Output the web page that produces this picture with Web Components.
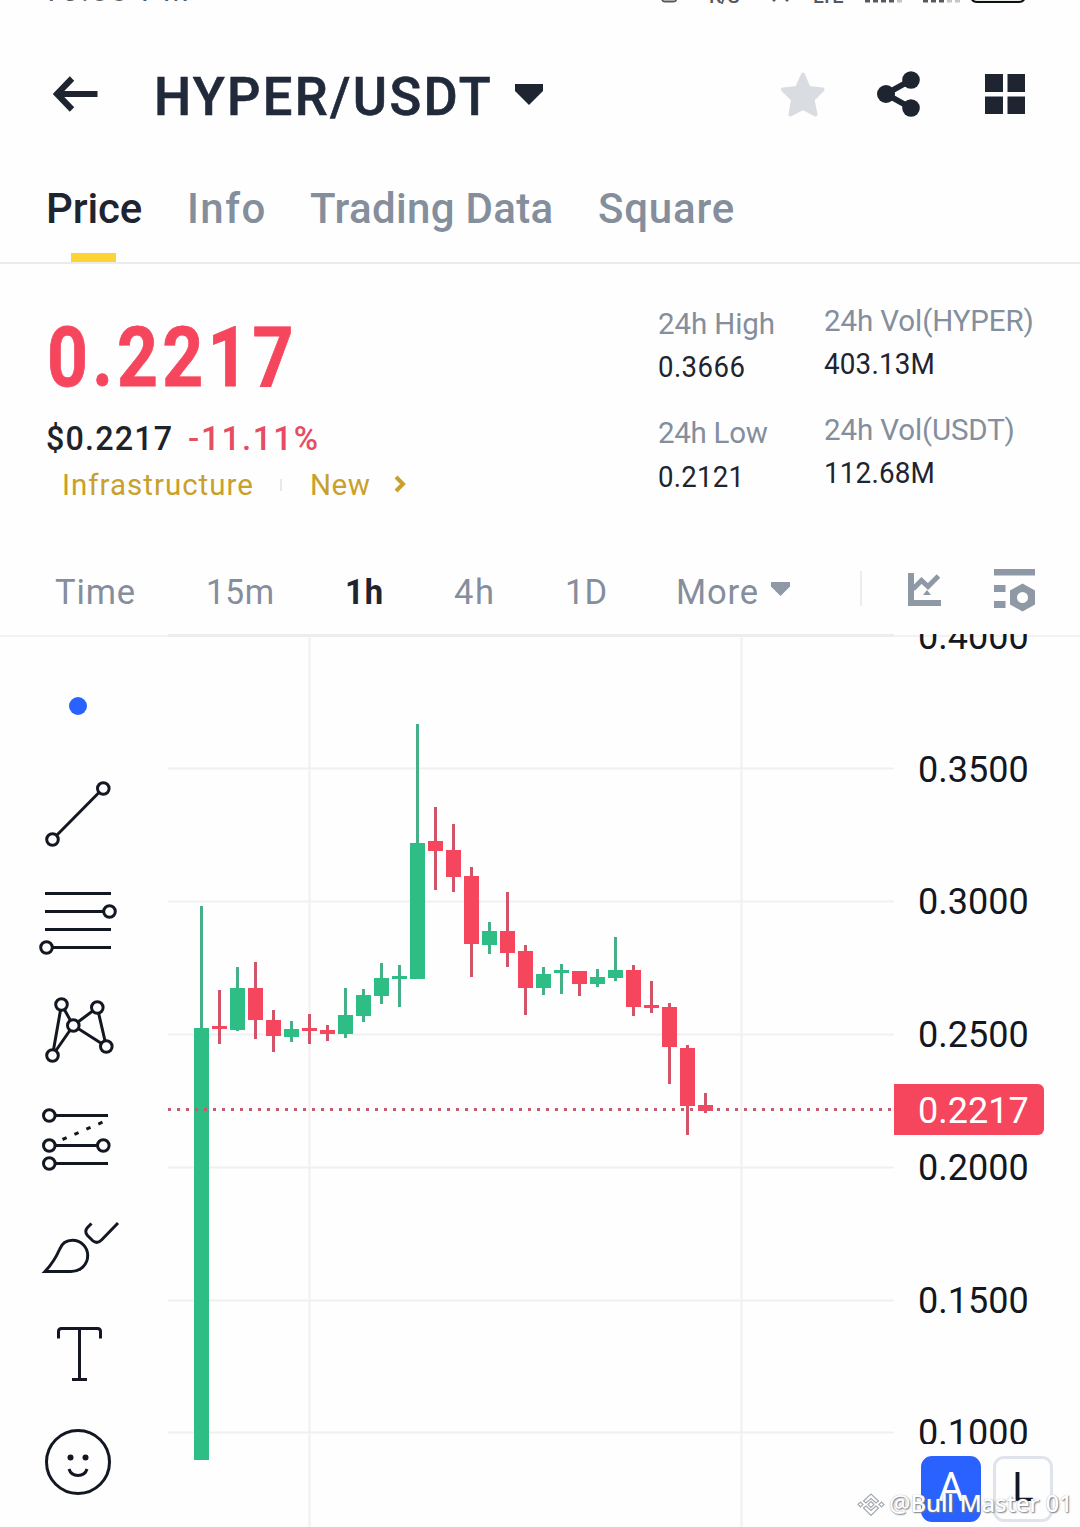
<!DOCTYPE html>
<html lang="en">
<head>
<meta charset="utf-8">
<title>HYPER/USDT</title>
<style>
html, body {
  margin: 0;
  padding: 0;
}
body {
  width: 1080px;
  height: 1527px;
  overflow: hidden;
  background: #fefefe;
  color: #1e2329;
  font-family: Roboto, "Noto Sans", sans-serif;
}
</style>
</head>
<body>
<trade-app></trade-app>
<script>
var ink = '#1e2430'
var gray = '#848e9c'
var red = '#f6465d'
var green = '#2ebd85'

function define(name, html, setup) {
  customElements.define(name, class extends HTMLElement {
    constructor() {
      super()
      this.attachShadow({mode: 'open'})
    }
    connectedCallback() {
      this.shadowRoot.innerHTML = html
      if(setup) setup(this, this.shadowRoot)
    }
  })
}

// text that spreads its letters to fill the width in w,
// squash makes the letters themselves narrower
define('fit-text', `
<style>
:host {
  display: block;
  white-space: nowrap;
  flex: none;
}
span {
  display: inline-block;
  transform-origin: left;
}
</style>
<span><slot></slot></span>`, function(el, root) {
  var span = root.querySelector('span')
  var w = Number(el.getAttribute('w'))
  var squash = Number(el.getAttribute('squash') || 1)
  el.style.width = w + 'px'
  var n = el.textContent.length
  var bearing = parseFloat(getComputedStyle(el).fontSize) * 0.03
  var natural = span.getBoundingClientRect().width
  span.style.letterSpacing = ((w + bearing) / squash - natural) / (n - 1) + 'px'
  if(squash != 1) span.style.transform = 'scaleX(' + squash + ')'
})

define('status-bar', `
<style>
:host {
  display: flex;
  height: 4px;
  overflow: hidden;
  color: #55585e;
  font-size: 30px;
  line-height: 30px;
}
fit-text {
  margin: -24px 0 0 42px;
}
.net {
  font-size: 20px;
  font-weight: 500;
  margin: -19px 0 0 0;
}
svg {
  display: block;
}
</style>
<fit-text w="146">10:33 PM</fit-text>
<svg width="521" height="4" viewBox="188 0 521 4"><path d="M662 0q1 1.500 3 1.500h8q3 0 3-1.500" fill="none" stroke="#55585e" stroke-width="1.800"/></svg>
<fit-text class="net" w="30">K/S</fit-text>
<svg width="74" height="4" viewBox="739 0 74 4"><path d="M772 0l2 2 2-2M785 0l2 2 2-2" fill="#55585e"/></svg>
<fit-text class="net" w="30">LTE</fit-text>
<svg width="237" height="4" viewBox="843 0 237 4">
<g stroke="#55585e" stroke-width="5" stroke-dasharray="5 3"><path d="M865 0h29M923 0h21"/><path d="M897 0h5M947 0h13" stroke="#c4c6ca"/></g>
<path d="M971-3q1 5 6 5h42q5 0 6-5" fill="#e4eee4" stroke="#111" stroke-width="2"/>
</svg>`)

define('pair-header', `
<style>
:host {
  display: flex;
  align-items: center;
  height: 180px;
  padding: 0 55px 0 53px;
  font-size: 54px;
  font-weight: 500;
  line-height: 60px;
  color: #212a3a;
}
fit-text {
  margin: 6px 2px 0 56px;
  -webkit-text-stroke: 0.6px #212a3a;
}
svg {
  display: block;
  flex: none;
}
.caret {
  margin-left: 24px;
}
.actions {
  display: flex;
  align-items: center;
  gap: 52px;
  margin-left: auto;
}
.grid {
  margin-left: 13px;
}
</style>
<svg width="45" height="36" viewBox="0 0 45 36"><path d="M3 18H44.500M19 2.500L4 18L19 33.500" fill="none" stroke="${ink}" stroke-width="6.200"/></svg>
<fit-text w="335" squash="0.97">HYPER/USDT</fit-text>
<svg class="caret" width="28" height="21" viewBox="1 0 28 21"><path d="M1 0H29V7L15 21L1 7z" fill="${ink}"/></svg>
<div class="actions">
<svg width="45" height="46" viewBox="0 0 45 46"><path d="M23 3.500L28.500 17L42.500 18.500L32.500 28.500L35.500 43.500L23 37L10.500 43.500L13 28.500L3 18.500L17 17z" fill="#d9dce1" stroke="#d9dce1" stroke-width="4" stroke-linejoin="round"/></svg>
<svg width="43" height="46" viewBox="0 0 43 46"><g fill="${ink}"><circle cx="9" cy="23" r="9"/><circle cx="34" cy="9" r="8.800"/><circle cx="34" cy="37" r="8.800"/></g><path d="M34 9L9 23L34 37" fill="none" stroke="${ink}" stroke-width="6"/></svg>
<svg class="grid" width="40" height="40" viewBox="0 0 40 40"><path d="M0 0h18v18H0zM22.500 0H40v18H22.500zM0 22.500h18V40H0zM22.500 22.500H40V40H22.500z" fill="${ink}"/></svg>
</div>`)

define('page-tab', `
<style>
:host {
  display: flex;
  flex-direction: column;
  justify-content: space-between;
  align-items: center;
  color: ${gray};
}
:host([active]) {
  color: ${ink};
}
.bar {
  width: 45px;
  height: 9px;
}
:host([active]) .bar {
  background: #fcd535;
}
</style>
<slot></slot>
<div class="bar"></div>`)

define('page-tabs', `
<style>
:host {
  display: flex;
  gap: 46px;
  height: 78px;
  padding-left: 46px;
  border-bottom: 2px solid #eaebec;
  font-size: 42px;
  font-weight: 500;
  line-height: 50px;
}
</style>
<page-tab active><fit-text w="95">Price</fit-text></page-tab>
<page-tab><fit-text w="77">Info</fit-text></page-tab>
<page-tab><fit-text w="242">Trading Data</fit-text></page-tab>
<page-tab><fit-text w="135">Square</fit-text></page-tab>`)

define('stat-item', `
<style>
:host {
  display: block;
}
.label {
  color: ${gray};
  font-size: 29.5px;
}
.value {
  font-size: 29px;
  color: ${ink};
}
</style>
<div class="label"><slot name="label"></slot></div>
<div class="value"><slot></slot></div>`)

define('price-summary', `
<style>
:host {
  display: flex;
  height: 286px;
}
.left {
  width: 611px;
  padding: 46px 0 0 47px;
  box-sizing: content-box;
  flex: none;
}
.price {
  font-size: 83px;
  font-weight: 700;
  line-height: 95px;
  color: ${red};
  -webkit-text-stroke: 0.8px ${red};
}
.change {
  display: flex;
  gap: 17px;
  margin-left: -1px;
  font-size: 34px;
  font-weight: 500;
  line-height: 66px;
  padding-bottom: 1px;
}
.down {
  color: #e64d62;
}
.tags {
  display: flex;
  align-items: center;
  margin-left: 15px;
  color: #c9a02c;
  font-size: 29.5px;
  line-height: 27px;
}
.sep {
  width: 2px;
  height: 12px;
  margin: -2px 28px 0;
  background: #e6e8ea;
}
.tags svg {
  margin: -3px 0 0 25px;
}
.col {
  display: flex;
  flex-direction: column;
  flex: none;
}
.high {
  width: 166px;
  gap: 22px;
  padding-top: 38px;
  line-height: 44px;
}
.high stat-item {
  line-height: 43.5px;
  padding-top: 0.5px;
}
.vol {
  gap: 24px;
  padding-top: 36px;
  line-height: 42.5px;
}
</style>
<div class="left">
<fit-text class="price" w="244" squash="0.86">0.2217</fit-text>
<div class="change"><fit-text w="125" squash="0.95">$0.2217</fit-text><fit-text class="down" w="129" squash="0.97">-11.11%</fit-text></div>
<div class="tags"><fit-text w="190">Infrastructure</fit-text><div class="sep"></div><fit-text w="59">New</fit-text>
<svg width="12" height="18" viewBox="0 0 12 18"><path d="M2 2L9 9L2 16" fill="none" stroke="#c9a02c" stroke-width="4"/></svg></div>
</div>
<div class="col high">
<stat-item><fit-text slot="label" w="116">24h High</fit-text><fit-text w="86" squash="0.95">0.3666</fit-text></stat-item>
<stat-item><fit-text slot="label" w="109">24h Low</fit-text><fit-text w="85" squash="0.95">0.2121</fit-text></stat-item>
</div>
<div class="col vol">
<stat-item><fit-text slot="label" w="209">24h Vol(HYPER)</fit-text><fit-text w="110" squash="0.96">403.13M</fit-text></stat-item>
<stat-item><fit-text slot="label" w="190">24h Vol(USDT)</fit-text><fit-text w="110" squash="0.96">112.68M</fit-text></stat-item>
</div>`)

define('interval-bar', `
<style>
:host {
  display: flex;
  align-items: center;
  gap: 72px;
  height: 84px;
  padding-left: 55px;
  box-sizing: border-box;
  color: ${gray};
  font-size: 34.5px;
  line-height: 40px;
}
.on {
  color: ${ink};
  font-weight: 700;
}
.more, .icons {
  display: flex;
  align-items: center;
  flex: none;
}
.more {
  margin-left: -2px;
}
.more svg {
  margin: -6px 0 0 14px;
}
.line {
  width: 2px;
  height: 35px;
  margin: -7px 46px 0 -2px;
  background: #eaecef;
}
.icons svg {
  margin-top: -6px;
}
.icons svg + svg {
  margin: -3px 0 0 53px;
}
</style>
<fit-text w="79">Time</fit-text>
<fit-text w="67" squash="0.97">15m</fit-text>
<fit-text w="37" class="on" squash="0.95">1h</fit-text>
<fit-text w="39">4h</fit-text>
<fit-text w="41">1D</fit-text>
<div class="more"><fit-text w="81">More</fit-text><svg width="19" height="14" viewBox="0 0 19 14"><path d="M0 0H19V4.500L9.500 14L0 4.500z" fill="#8f98a5"/></svg></div>
<div class="icons">
<div class="line"></div>
<svg width="33" height="33" viewBox="0 0 33 33"><g fill="#8f98a5"><path d="M0 0h6v27h27v6H0z"/><path d="M19 17l4 5h-8z"/></g><path d="M5 16L13.500 7.500L20 13.500L30.500 3" fill="none" stroke="#8f98a5" stroke-width="5"/></svg>
<svg width="42" height="43" viewBox="0 0 42 43"><path d="M0 0h41v6.500H0zM0 16h11.500v7H0zM0 32h11.500v7H0zM28.500 14.500L41 21.500V35.500L28.500 42.500L16 35.500V21.500zM28.500 23a5.500 5.500 0 1 0 0 11a5.500 5.500 0 1 0 0-11z" fill="#8f98a5" fill-rule="evenodd"/></svg>
</div>`)

// tool glyphs share one coordinate space, 108px per tool
var tools = [
  `<circle cx="78" cy="706" r="9" fill="#2962ff" stroke="none"/>`,
  `<path d="M56.500 835.500L99 792.500"/><circle cx="103.300" cy="788.500" r="5.800"/><circle cx="52.500" cy="839.500" r="5.800"/>`,
  `<path d="M45 893.500H111M45 911.500H104M45 929.500H111M52 947.500H111"/><circle cx="109.500" cy="911.500" r="5.800"/><circle cx="46.500" cy="947.500" r="5.800"/>`,
  `<path d="M61.500 1004.500L52.500 1055.500L73.300 1025.500zM97.300 1007.500L73.300 1025.500L106.300 1046.500z"/><g fill="#fefefe"><circle cx="61.500" cy="1004.500" r="5.800"/><circle cx="97.300" cy="1007.500" r="5.800"/><circle cx="73.300" cy="1025.500" r="5.800"/><circle cx="52.500" cy="1055.500" r="5.800"/><circle cx="106.300" cy="1046.500" r="5.800"/></g>`,
  `<path d="M55 1115.500H108M55 1145.500H98M55 1163.500H108"/><path d="M62.500 1139.500L103 1122" stroke-dasharray="4.500 8.500"/><circle cx="49.300" cy="1115.500" r="5.800"/><circle cx="49.300" cy="1145.500" r="5.800"/><circle cx="103.300" cy="1145.500" r="5.800"/><circle cx="49.300" cy="1163.500" r="5.800"/>`,
  `<path d="M45 1271.500C52 1264 56.500 1256.500 59.500 1249.500C62 1243 67 1240.300 72.500 1240.300C81 1240.300 87.700 1247 87.700 1255.500C87.700 1265 80 1271.500 71 1271.500z"/><path d="M91.500 1223.500L87.500 1227.500Q84 1231.500 87.500 1235.500L92.500 1240.500Q97 1244.500 101.500 1240L118 1223"/>`,
  `<path d="M58.500 1338.500V1331.500Q58.500 1328.500 61.500 1328.500H97.500Q100.500 1328.500 100.500 1331.500V1338.500M79.500 1328.500V1379.500M72 1379.500H87"/>`,
  `<circle cx="78" cy="1462" r="31.500"/><g fill="#131722" stroke="none"><circle cx="70.500" cy="1457.500" r="3"/><circle cx="85.500" cy="1457.500" r="3"/></g><path d="M69 1469Q71 1475.500 78 1475.500Q85 1475.500 87 1469"/>`
]
define('drawing-tools', `
<style>
:host {
  display: flex;
  flex-direction: column;
  width: 168px;
  padding-top: 18px;
  box-sizing: border-box;
}
svg {
  display: block;
  flex: none;
}
</style>`, function(el, root) {
  root.innerHTML += tools.map((glyph, i) =>
    `<svg width="168" height="108" viewBox="0 ${652 + i * 108} 168 108" fill="none" stroke="#131722" stroke-width="3">${glyph}</svg>`).join('')
})

// [up, high, low, body top, body bottom]
var candles = [
  [1, 906, 1460, 1028, 1460], [0, 990, 1044, 1026, 1029], [1, 967, 1031, 988, 1030],
  [0, 962, 1039, 988, 1020], [0, 1010, 1052, 1020, 1036], [1, 1021, 1042, 1029, 1037],
  [0, 1014, 1044, 1028, 1031], [0, 1025, 1041, 1030, 1034], [1, 988, 1038, 1015, 1034],
  [1, 989, 1022, 995, 1016], [1, 963, 1004, 978, 996], [1, 965, 1007, 976, 979],
  [1, 724, 979, 843, 979], [0, 807, 890, 841, 851], [0, 824, 892, 850, 877],
  [0, 867, 977, 876, 944], [1, 922, 954, 931, 945], [0, 892, 967, 931, 953],
  [0, 945, 1015, 951, 988], [1, 967, 995, 974, 988], [1, 964, 994, 970, 973],
  [0, 971, 996, 971, 984], [1, 969, 987, 977, 984], [1, 937, 981, 970, 978],
  [0, 965, 1016, 970, 1007], [0, 981, 1013, 1005, 1008], [0, 1003, 1084, 1007, 1047],
  [0, 1045, 1135, 1048, 1106], [0, 1093, 1113, 1105, 1111]
]
define('candle-plot', `
<style>
:host {
  display: block;
  width: 726px;
}
svg {
  display: block;
}
</style>`, function(el, root) {
  var svg = '<svg width="726" height="893" viewBox="168 634 726 893">'
  svg += '<path d="M168 635.500H894" stroke="#eceeee" stroke-width="3"/>'
  svg += '<path d="M309.500 636V1527M741.500 636V1527M168 768.500H894M168 901.500H894M168 1034.500H894M168 1167.500H894M168 1300.500H894M168 1432.500H894" stroke="#eff0f0" stroke-width="2"/>'
  candles.forEach((c, i) => {
    var x = 194 + i * 18
    svg += `<rect x="${x + 6}" y="${c[1]}" width="3" height="${c[2] - c[1]}" fill="${c[0] ? '#45b087' : '#d25468'}"/>`
    svg += `<rect x="${x}" y="${c[3]}" width="15" height="${c[4] - c[3]}" fill="${c[0] ? green : red}"/>`
  })
  svg += '<path d="M168 1109.500H894" stroke="#c75a6c" stroke-width="3" stroke-dasharray="3 6"/></svg>'
  root.innerHTML += svg
})

define('price-axis', `
<style>
:host {
  display: block;
  position: relative;
  width: 186px;
  font-size: 36px;
  color: #131722;
}
.scale {
  height: 810px;
  overflow: hidden;
}
.scale div {
  height: 132.7px;
  line-height: 132.7px;
  padding-left: 24px;
}
.scale div:first-child {
  margin-top: -62.9px;
}
.last {
  position: absolute;
  top: 450px;
  left: 0;
  width: 150px;
  height: 51px;
  padding-left: 24px;
  box-sizing: border-box;
  line-height: 54px;
  border-radius: 0 6px 6px 0;
  background: ${red};
  color: #fff;
}
.modes {
  display: flex;
  gap: 12px;
  padding: 12px 0 0 27px;
}
.modes div {
  width: 60px;
  height: 66px;
  box-sizing: border-box;
  border-radius: 11px;
  border: 3px solid #e0e3eb;
  line-height: 57px;
  font-size: 40px;
  text-align: center;
}
.modes .auto {
  border-color: #2962ff;
  background: #2962ff;
  color: #fff;
}
</style>
<div class="scale"><div>0.4000</div><div>0.3500</div><div>0.3000</div><div>0.2500</div><div>0.2000</div><div>0.1500</div><div>0.1000</div></div>
<div class="last">0.2217</div>
<div class="modes"><div class="auto">A</div><div>L</div></div>`)

define('post-watermark', `
<style>
:host {
  display: flex;
  align-items: center;
  gap: 4px;
  position: absolute;
  left: 857px;
  top: 1487px;
  color: #fff;
  font-family: "Noto Sans", sans-serif;
  font-size: 24px;
  font-weight: 500;
  line-height: 32px;
  text-shadow: 1px 1px 1.5px #777c85, 0 0 1px #a5a9b0;
}
svg {
  margin-top: 4px;
}
</style>
<svg width="28" height="24" viewBox="0 0 28 24" fill="#fff" stroke="#a5a9b0" stroke-width="1.200"><path d="M6.500 8L14 1L21.500 8L19 10L14 5.500L9 10zM14 8.500L17 11.500L14 14.500L11 11.500zM6.500 15L9 13L14 17.500L19 13L21.500 15L14 22.500zM1 11.500L3.500 9L6 11.500L3.500 14zM22 11.500L24.500 9L27 11.500L24.500 14z"/></svg>
<fit-text w="183">@Bull Master 01</fit-text>`)

define('trade-app', `
<style>
:host {
  display: block;
  position: relative;
  width: 1080px;
  height: 1527px;
  overflow: hidden;
}
.chart {
  display: flex;
  height: 893px;
  background: linear-gradient(#f1f2f2, #f1f2f2) 0 1px / 100% 2px no-repeat;
}
</style>
<status-bar></status-bar>
<pair-header></pair-header>
<page-tabs></page-tabs>
<price-summary></price-summary>
<interval-bar></interval-bar>
<div class="chart"><drawing-tools></drawing-tools><candle-plot></candle-plot><price-axis></price-axis></div>
<post-watermark></post-watermark>`)
</script>
</body>
</html>
